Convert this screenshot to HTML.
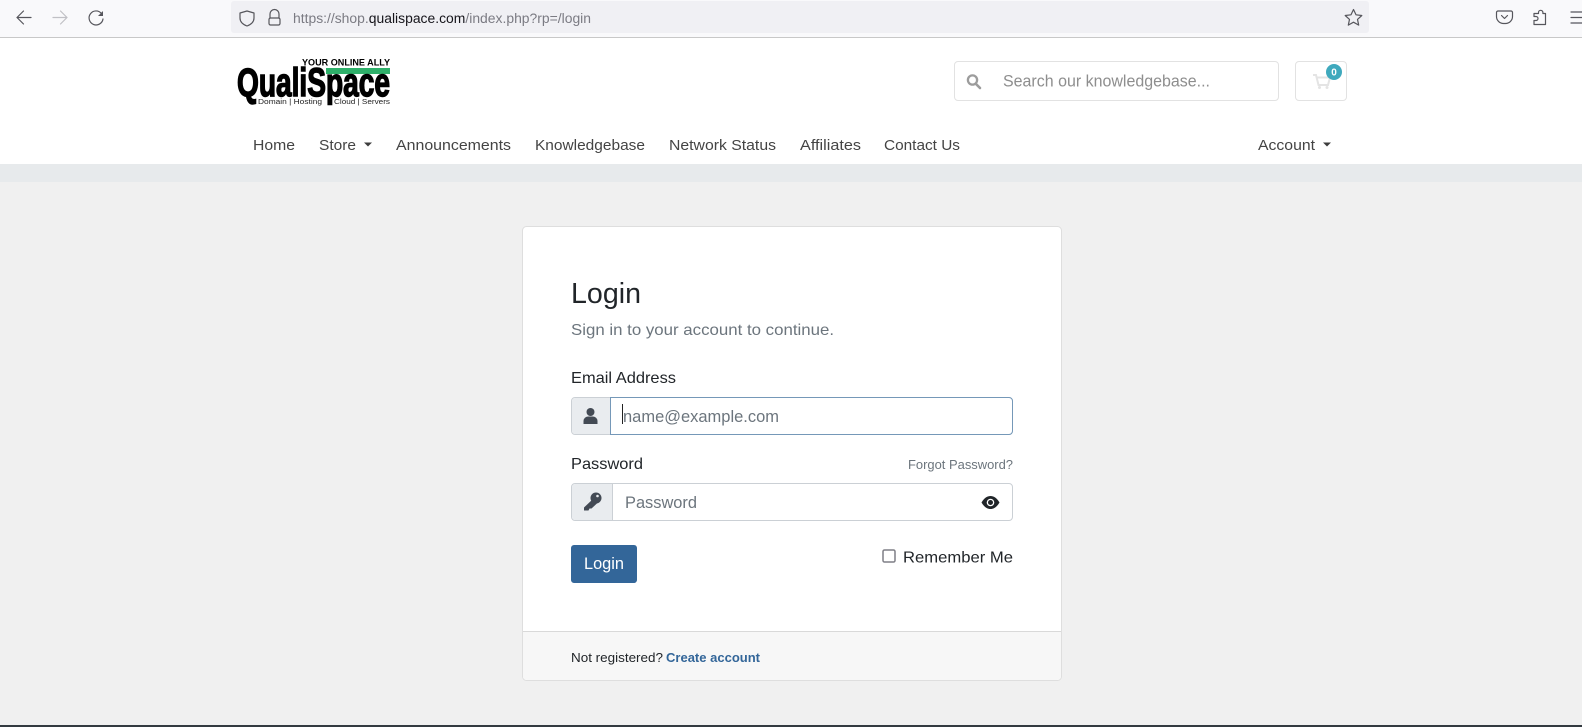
<!DOCTYPE html>
<html lang="en"><head><meta charset="utf-8"><title>Login - QualiSpace</title>
<style>
html,body{margin:0;padding:0;width:1582px;height:727px;overflow:hidden;background:#f0f0f0}
svg{display:block}
text{font-family:"Liberation Sans",sans-serif}
.nav{font-size:15px;fill:#444}
.ic{fill:none;stroke:#56565c;stroke-width:1.2;stroke-linecap:round;stroke-linejoin:round}
</style></head><body>
<svg width="1582" height="727" viewBox="0 0 1582 727" xmlns="http://www.w3.org/2000/svg">
<rect width="1582" height="727" fill="#f0f0f0"/>
<!-- browser toolbar -->
<rect width="1582" height="37" fill="#f9f9fb"/>
<rect y="37" width="1582" height="1" fill="#c8c8c8"/>
<rect x="231" y="1" width="1138" height="32" rx="3" fill="#f0f0f4"/>
<path class="ic" d="M31 17.500H17M23.500 11L17 17.500L23.500 24"/>
<path class="ic" style="stroke:#c0c0c5" d="M53 17.500H67M60.500 11L67 17.500L60.500 24"/>
<path class="ic" d="M101.500 13.500A7 7 0 1 0 103 19"/><path d="M103 11v5h-5z" fill="#56565c"/>
<path class="ic" d="M247 11l7 2v5c0 4-3 6.500-7 8c-4-1.500-7-4-7-8v-5z"/>
<path class="ic" d="M270 18v-4a4.500 4.500 0 0 1 9 0v4"/><rect class="ic" x="269" y="18" width="11" height="7" rx="1.500"/>
<text x="293" y="23" font-size="13.500" fill="#7b7b83" textLength="298" lengthAdjust="spacingAndGlyphs">https://shop.<tspan fill="#15141a">qualispace.com</tspan>/index.php?rp=/login</text>
<path class="ic" d="M1353.500 9.500l2.500 5.300 5.800.7-4.300 3.900 1.200 5.700-5.200-2.900-5.200 2.900 1.200-5.700-4.300-3.900 5.800-.7z"/>
<path class="ic" d="M1498 11h13a1.500 1.500 0 0 1 1.500 1.500v4a7 7 0 0 1-7 7h-2a7 7 0 0 1-7-7v-4a1.500 1.500 0 0 1 1.500-1.500z"/><path class="ic" d="M1501.500 15.500l3 3 3-3"/>
<path class="ic" d="M1534 24.500v-4h2a2 2 0 0 0 0-4h-2v-3h4.500v-1a2.200 2.200 0 0 1 4.400 0v1h2.600v11z"/>
<path class="ic" d="M1571 12h11M1571 17.500h11M1571 23h11"/>

<!-- header -->
<rect y="38" width="1582" height="126" fill="#fff"/>
<rect y="164" width="1582" height="18" fill="#e7eaec"/>
<!-- logo -->
<text x="302" y="65.500" font-size="9.500" font-weight="700" fill="#000" textLength="88" lengthAdjust="spacingAndGlyphs">YOUR ONLINE ALLY</text>
<rect x="326" y="68" width="64" height="6" fill="#2eb06a"/>
<text x="237" y="96" font-size="40" font-weight="700" fill="#000" stroke="#000" stroke-width="1.500" textLength="153" lengthAdjust="spacingAndGlyphs">QualiSpace</text>
<text x="258" y="104" font-size="7.500" fill="#222" textLength="64" lengthAdjust="spacingAndGlyphs">Domain | Hosting</text>
<text x="334" y="104" font-size="7.500" fill="#222" textLength="56" lengthAdjust="spacingAndGlyphs">Cloud | Servers</text>
<!-- search -->
<rect x="954.500" y="61.500" width="324" height="39" rx="3.500" fill="#fff" stroke="#e2e2e2"/>
<circle cx="972.500" cy="80" r="4.600" fill="none" stroke="#9c9c9c" stroke-width="2.300"/><path d="M976 84l4 4" stroke="#9c9c9c" stroke-width="2.600" stroke-linecap="round"/>
<text x="1003" y="86.500" font-size="16.500" fill="#8e8e8e" textLength="207" lengthAdjust="spacingAndGlyphs">Search our knowledgebase...</text>
<!-- cart -->
<rect x="1295.500" y="61.500" width="51" height="39" rx="3.500" fill="#fff" stroke="#e2e2e2"/>
<path d="M1313 75h3l2.500 10h9.500l2-7.500h-13" fill="none" stroke="#e4e4e4" stroke-width="2"/><circle cx="1319.500" cy="87.500" r="1.500" fill="#e4e4e4"/><circle cx="1327" cy="87.500" r="1.500" fill="#e4e4e4"/>
<circle cx="1334" cy="72" r="8" fill="#3fa9bd"/>
<text x="1334" y="75.500" font-size="10" font-weight="700" fill="#fff" text-anchor="middle">0</text>
<!-- nav -->
<text class="nav" x="253" y="150" textLength="42" lengthAdjust="spacingAndGlyphs">Home</text>
<text class="nav" x="319" y="150" textLength="37" lengthAdjust="spacingAndGlyphs">Store</text>
<path d="M364 142.500h8l-4 4z" fill="#3d3d3d"/>
<text class="nav" x="396" y="150" textLength="115" lengthAdjust="spacingAndGlyphs">Announcements</text>
<text class="nav" x="535" y="150" textLength="110" lengthAdjust="spacingAndGlyphs">Knowledgebase</text>
<text class="nav" x="669" y="150" textLength="107" lengthAdjust="spacingAndGlyphs">Network Status</text>
<text class="nav" x="800" y="150" textLength="61" lengthAdjust="spacingAndGlyphs">Affiliates</text>
<text class="nav" x="884" y="150" textLength="76" lengthAdjust="spacingAndGlyphs">Contact Us</text>
<text class="nav" x="1258" y="150" textLength="57" lengthAdjust="spacingAndGlyphs">Account</text>
<path d="M1323 142.500h8l-4 4z" fill="#3d3d3d"/>

<!-- card -->
<rect x="522.500" y="226.500" width="539" height="454" rx="4" fill="#fff" stroke="#dedede"/>
<path d="M523 631H1061V676a4 4 0 0 1-4 4H527a4 4 0 0 1-4-4z" fill="#f7f7f7"/>
<rect x="523" y="631" width="538" height="1" fill="#d9d9d9"/>
<text x="571" y="303" font-size="29" fill="#212529" textLength="70" lengthAdjust="spacingAndGlyphs">Login</text>
<text x="571" y="335" font-size="16" fill="#6c757d" textLength="263" lengthAdjust="spacingAndGlyphs">Sign in to your account to continue.</text>
<text x="571" y="383" font-size="16" fill="#212529" textLength="105" lengthAdjust="spacingAndGlyphs">Email Address</text>
<!-- email -->
<rect x="571.500" y="397.500" width="441" height="37" rx="3.500" fill="#fff" stroke="#cbd0d5"/>
<path d="M575 398H610V434H575a3 3 0 0 1-3-3V401a3 3 0 0 1 3-3z" fill="#e9ecef"/>
<path d="M610.500 397.500H1009a3.500 3.500 0 0 1 3.500 3.500V431a3.500 3.500 0 0 1-3.500 3.500H610.500z" fill="#fff" stroke="#7598b8"/>
<circle cx="590.500" cy="412" r="4" fill="#434a54"/><path d="M583.500 424v-3a4.500 4.500 0 0 1 4.500-4.500h5a4.500 4.500 0 0 1 4.500 4.500v3z" fill="#434a54"/>
<rect x="622" y="404" width="1" height="20" fill="#222"/>
<text x="623" y="422" font-size="17" fill="#6c757d" textLength="156" lengthAdjust="spacingAndGlyphs">name@example.com</text>
<!-- password -->
<text x="571" y="469" font-size="16" fill="#212529" textLength="72" lengthAdjust="spacingAndGlyphs">Password</text>
<text x="1013" y="469" font-size="13" fill="#6c757d" text-anchor="end" textLength="105" lengthAdjust="spacingAndGlyphs">Forgot Password?</text>
<rect x="571.500" y="483.500" width="441" height="37" rx="3.500" fill="#fff" stroke="#cbd0d5"/>
<path d="M575 484H612V520H575a3 3 0 0 1-3-3V487a3 3 0 0 1 3-3z" fill="#e9ecef"/>
<rect x="612" y="484" width="1" height="36" fill="#cbd0d5"/>
<circle cx="596" cy="498" r="5.500" fill="#434a54"/><path d="M593 499l-9 8.500v3h4.500l1-2h2l6.500-6z" fill="#434a54"/><circle cx="597.500" cy="496" r="1.300" fill="#e9ecef"/>
<text x="625" y="508" font-size="17" fill="#6c757d" textLength="72" lengthAdjust="spacingAndGlyphs">Password</text>
<path d="M981.500 502.500c3-5 6-6.500 9-6.500s6 1.500 9 6.500c-3 5-6 6.500-9 6.500s-6-1.500-9-6.500z" fill="#212529"/><circle cx="990.500" cy="502.500" r="3.800" fill="#fff"/><circle cx="990.500" cy="502.500" r="2.500" fill="#212529"/>
<!-- actions -->
<rect x="571" y="545" width="66" height="38" rx="3" fill="#336699"/>
<text x="604" y="569" font-size="16.500" fill="#fff" text-anchor="middle" textLength="40" lengthAdjust="spacingAndGlyphs">Login</text>
<rect x="883" y="550" width="12" height="12" rx="1.500" fill="#fff" stroke="#7f7f86" stroke-width="1.500"/>
<text x="903" y="562.500" font-size="16" fill="#212529" textLength="110" lengthAdjust="spacingAndGlyphs">Remember Me</text>
<!-- footer -->
<text x="571" y="662" font-size="13" fill="#212529" textLength="92" lengthAdjust="spacingAndGlyphs">Not registered?</text>
<text x="666" y="662" font-size="13" font-weight="700" fill="#336699" textLength="94" lengthAdjust="spacingAndGlyphs">Create account</text>
<rect y="725" width="1582" height="2" fill="#333a40"/>
</svg>
</body></html>
